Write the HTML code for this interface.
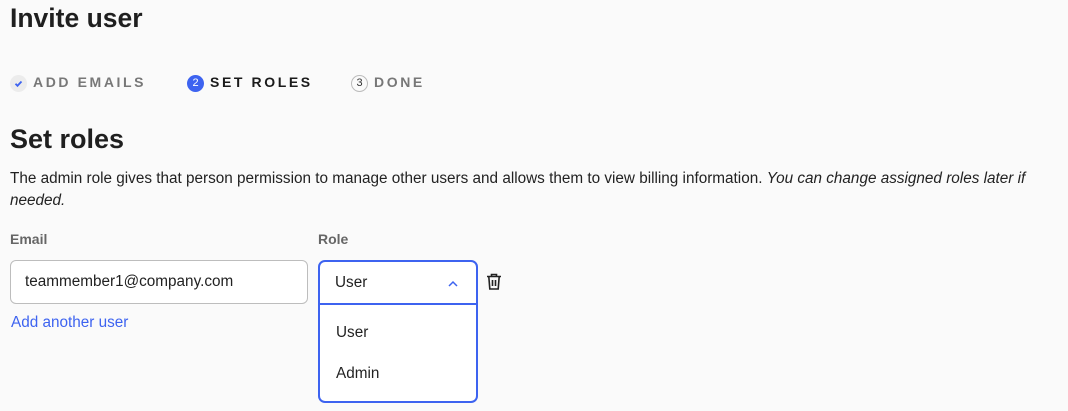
<!DOCTYPE html>
<html><head><style>
*{box-sizing:border-box;margin:0;padding:0}
body{width:1068px;height:411px;background:#fafafa;font-family:"Liberation Sans",sans-serif;color:#1f1f1f;position:relative;overflow:hidden}
.a{position:absolute;white-space:nowrap}
h1{font-size:26.5px;font-weight:bold}
.step{font-size:14px;font-weight:bold;letter-spacing:2.6px;color:#777}
.circ{position:absolute;width:17px;height:17px;border-radius:50%;font-size:11px;text-align:center;line-height:17px}
</style></head><body>
<div class="a" style="left:10px;top:3px"><h1>Invite user</h1></div>

<div class="circ" style="left:10px;top:75px;background:#ececec"><svg width="17" height="17" viewBox="0 0 17 17"><path d="M5.5 8.8l2 2 4-4.3" stroke="#3d63f0" stroke-width="1.8" fill="none"/></svg></div>
<div class="a step" style="left:33px;top:74px">ADD EMAILS</div>
<div class="circ" style="left:187px;top:75px;background:#3d63f0;color:#fff">2</div>
<div class="a step" style="left:210px;top:74px;color:#1a1a1a">SET ROLES</div>
<div class="circ" style="left:351px;top:75px;border:1px solid #bbb;color:#333;line-height:15px">3</div>
<div class="a step" style="left:374px;top:74px">DONE</div>

<div class="a" style="left:10px;top:124px;font-size:27px;font-weight:bold">Set roles</div>
<div class="a" style="left:10px;top:168px;font-size:15.3px;line-height:22px;width:1045px;white-space:normal;color:#222">The admin role gives that person permission to manage other users and allows them to view billing information. <i>You can change assigned roles later if needed.</i></div>

<div class="a" style="left:10px;top:231px;font-size:14px;font-weight:bold;color:#666">Email</div>
<div class="a" style="left:318px;top:231px;font-size:14px;font-weight:bold;color:#666">Role</div>

<div class="a" style="left:10px;top:260px;width:298px;height:44px;border:1px solid #bdbdbd;border-radius:6px;background:#fff;font-size:15.3px;padding:12px 14px;color:#222">teammember1@company.com</div>
<div class="a" style="left:11px;top:314px;font-size:15.3px;color:#3d63f0">Add another user</div>

<div class="a" style="left:318px;top:260px;width:160px;height:143px;border:2px solid #3d63f0;border-radius:7px;background:#fff">
 <div style="height:43px;border-bottom:2px solid #3d63f0;padding:12px 15px;font-size:15.3px;position:relative">User
  <svg style="position:absolute;left:127px;top:18px" width="12" height="8" viewBox="0 0 12 8"><path d="M2 6l4-4 4 4" stroke="#3d63f0" stroke-width="1.5" fill="none"/></svg></div>
 <div style="padding:19px 16px 0;font-size:15.3px;color:#222">User</div>
 <div style="padding:23px 16px 0;font-size:15.3px;color:#222">Admin</div>
</div>

<svg class="a" style="left:486px;top:273px" width="16" height="18" viewBox="0 0 16 18"><path d="M1 3.5h14M5.5 3.5V1.5h5v2M2.8 3.5l1 12.5h8.4l1-12.5M6.5 7v6M9.5 7v6" stroke="#222" stroke-width="1.6" fill="none"/></svg>
</body></html>
